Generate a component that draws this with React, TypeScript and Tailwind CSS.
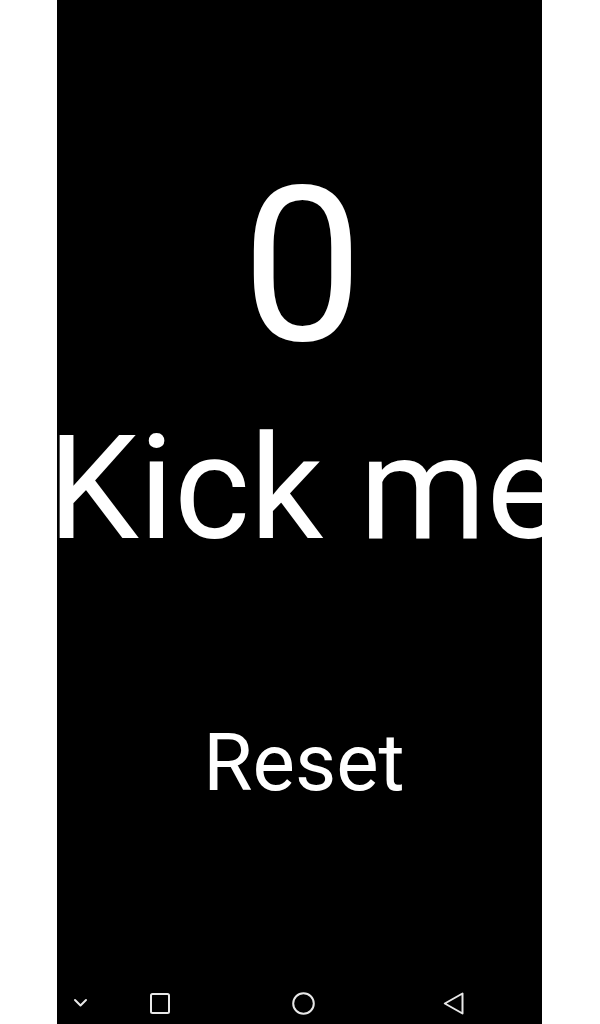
import React from "react";

export default function App() {
  return (
    <div className="w-[600px] h-[1024px] bg-white flex" style={{ fontFamily: "Roboto, 'Noto Sans', sans-serif" }}>
      <div className="ml-[57px] w-[485px] h-[1024px] bg-black overflow-hidden flex flex-col text-white">
        <div className="pt-[159px] pl-[6px] flex justify-center">
          <span className="text-[216px] leading-none">0</span>
        </div>
        <div className="mt-[41px] pl-[12px] flex justify-center whitespace-nowrap">
          <span className="text-[145px] leading-none shrink-0">Kick me</span>
        </div>
        <div className="mt-[162px] pl-[9px] flex justify-center">
          <span className="text-[80px] leading-none">Reset</span>
        </div>
        <div className="flex-1" />
        <div className="h-[42px] flex items-center pl-[16px] text-[#e8e8e8]">
          <svg width="15" height="10" viewBox="0 0 15 10" className="shrink-0">
            <polyline points="2,2 7.5,7.5 13,2" fill="none" stroke="currentColor" strokeWidth="2" strokeLinecap="round" strokeLinejoin="round" />
          </svg>
          <svg width="20" height="21" viewBox="0 0 20 21" className="ml-[62px] shrink-0">
            <rect x="1" y="1" width="18" height="19" rx="1.5" fill="none" stroke="currentColor" strokeWidth="2" />
          </svg>
          <svg width="23" height="23" viewBox="0 0 23 23" className="ml-[122px] shrink-0">
            <circle cx="11.5" cy="11.5" r="10.3" fill="none" stroke="currentColor" strokeWidth="2" />
          </svg>
          <svg width="21" height="23" viewBox="0 0 21 23" className="ml-[128px] shrink-0">
            <polygon points="19.5,1.5 19.5,21.5 1.8,11.5" fill="none" stroke="currentColor" strokeWidth="2" strokeLinejoin="round" />
          </svg>
        </div>
      </div>
    </div>
  );
}
